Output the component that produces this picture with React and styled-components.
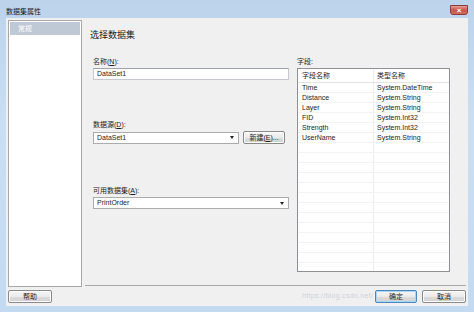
import styled, { createGlobalStyle } from 'styled-components'

const Global = createGlobalStyle`
  html, body { margin: 0; padding: 0; }
  body {
    width: 474px;
    height: 312px;
    overflow: hidden;
    font-family: "Liberation Sans", "Noto Sans CJK SC", sans-serif;
    font-size: 7px;
    color: #1e1e1e;
  }
`

const Frame = styled.div`
  position: relative;
  width: 474px;
  height: 312px;
  display: flex;
  flex-direction: column;
  background: linear-gradient(180deg, #bcd3ec 0%, #cadff3 40%, #c4daf1 100%);
  box-sizing: border-box;
`

const TitleBar = styled.div`
  height: 18px;
  display: flex;
  align-items: center;
  justify-content: space-between;
  padding: 3px 6px 0 6px;
  box-sizing: border-box;
`

const Title = styled.span`
  font-size: 7px;
  color: #1a1a1a;
`

const CloseButton = styled.div`
  align-self: flex-start;
  margin-top: 2px;
  width: 18px;
  height: 10px;
  border-radius: 0 0 3px 3px;
  border: 1px solid #8c3a3a;
  background: linear-gradient(180deg, #e5a095 0%, #c8564a 50%, #d06a5c 100%);
  color: #fff;
  font-size: 8px;
  line-height: 10px;
  text-align: center;
  font-weight: bold;
  box-sizing: border-box;
`

const Client = styled.div`
  margin: 0 6px 6px 6px;
  height: 288px;
  background: #f0f0f0;
  display: flex;
  flex-direction: column;
  position: relative;
`

const Top = styled.div`
  height: 269px;
  padding-top: 2px;
  box-sizing: border-box;
  display: flex;
  align-items: flex-start;
`

const Nav = styled.div`
  margin-left: 2px;
  width: 74px;
  height: 267px;
  box-sizing: border-box;
  background: #fff;
  border: 1px solid #a8a8a8;
  padding: 1px;
`

const NavItem = styled.div`
  height: 13px;
  line-height: 13px;
  padding-left: 8px;
  background: ${p => (p.$active ? '#bfc9d6' : 'transparent')};
  color: ${p => (p.$active ? '#fff' : '#222')};
`

const Main = styled.div`
  flex: 1;
  margin: 0 2px 0 3px;
  height: 266px;
  box-sizing: border-box;
  border-bottom: 1px solid #a9a9a9;
  padding-top: 10px;
`

const Heading = styled.div`
  margin-left: 5px;
  font-size: 9px;
  line-height: 11px;
  color: #1a1a1a;
`

const Columns = styled.div`
  display: flex;
  gap: 8px;
  margin-top: 16px;
  padding-left: 8px;
`

const FormColumn = styled.div`
  width: 196px;
  display: flex;
  flex-direction: column;
`

const FieldColumn = styled.div`
  width: 153px;
  display: flex;
  flex-direction: column;
`

const Label = styled.div`
  height: 10px;
  line-height: 10px;
  margin-top: ${p => p.$gap || 0}px;
  margin-bottom: 1px;
  white-space: nowrap;
`

const Key = styled.span`
  text-decoration: underline;
`

const TextBox = styled.div`
  height: 12px;
  box-sizing: border-box;
  background: #fff;
  border: 1px solid #c5c8cf;
  border-top-color: #9ea2a9;
  line-height: 10px;
  padding-left: 3px;
`

const Row = styled.div`
  display: flex;
  gap: 4px;
  align-items: center;
`

const Combo = styled.div`
  width: ${p => p.$width}px;
  height: 12px;
  box-sizing: border-box;
  background: #fff;
  border: 1px solid #acacac;
  line-height: 10px;
  padding: 0 4px 0 3px;
  display: flex;
  justify-content: space-between;
  align-items: center;
`

const Arrow = styled.span`
  width: 0;
  height: 0;
  border-left: 2px solid transparent;
  border-right: 2px solid transparent;
  border-top: 3px solid #222;
`

const Button = styled.div`
  position: relative;
  z-index: 1;
  width: ${p => p.$width}px;
  height: 13px;
  box-sizing: border-box;
  border: 1px solid ${p => (p.$default ? '#4a88c0' : '#8a8a8a')};
  border-radius: 2px;
  background: linear-gradient(180deg, #f6f6f6 0%, #ebebeb 50%, #dcdcdc 51%, #d2d2d2 100%);
  box-shadow: inset 0 0 0 1px ${p => (p.$default ? '#a9d6f5' : '#fbfbfb')};
  line-height: 11px;
  text-align: center;
  white-space: nowrap;
`

const ListBox = styled.div`
  height: 204px;
  box-sizing: border-box;
  background: #fff;
  border: 1px solid #8e9196;
  overflow: hidden;
`

const ListRow = styled.div`
  display: grid;
  grid-template-columns: 76px 1fr;
  height: ${p => (p.$header ? 14 : 10)}px;
  line-height: ${p => (p.$header ? 14 : 10)}px;
  border-bottom: 1px solid ${p => (p.$header ? '#e3e3e3' : '#f3f3f3')};
  box-sizing: border-box;
`

const Cell = styled.div`
  padding-left: ${p => (p.$first ? 4 : 3)}px;
  border-right: ${p => (p.$first ? '1px solid #ededed' : 'none')};
  white-space: nowrap;
  overflow: hidden;
`

const Footer = styled.div`
  height: 19px;
  padding: 3px 2px 0 2px;
  box-sizing: border-box;
  display: flex;
  align-items: flex-start;
`

const Spacer = styled.div`
  flex: 1;
`

const FooterRight = styled.div`
  display: flex;
  gap: 5px;
`

const Watermark = styled.div`
  position: absolute;
  left: 296px;
  bottom: 7px;
  font-size: 7px;
  color: rgba(195, 200, 212, 0.8);
  letter-spacing: 0.3px;
  pointer-events: none;
`

const fields = [
  ['Time', 'System.DateTime'],
  ['Distance', 'System.String'],
  ['Layer', 'System.String'],
  ['FID', 'System.Int32'],
  ['Strength', 'System.Int32'],
  ['UserName', 'System.String'],
]

export default function App() {
  const rows = [...fields]
  while (rows.length < 20) rows.push(['', ''])

  return (
    <>
      <Global />
      <Frame>
        <TitleBar>
          <Title>数据集属性</Title>
          <CloseButton>×</CloseButton>
        </TitleBar>
        <Client>
          <Top>
            <Nav>
              <NavItem $active>常规</NavItem>
            </Nav>
            <Main>
              <Heading>选择数据集</Heading>
              <Columns>
                <FormColumn>
                  <Label>名称(<Key>N</Key>):</Label>
                  <TextBox>DataSet1</TextBox>
                  <Label $gap={40}>数据源(<Key>D</Key>):</Label>
                  <Row>
                    <Combo $width={146}>
                      <span>DataSet1</span>
                      <Arrow />
                    </Combo>
                    <Button $width={42}>新建(<Key>E</Key>)...</Button>
                  </Row>
                  <Label $gap={42}>可用数据集(<Key>A</Key>):</Label>
                  <Combo $width={196}>
                    <span>PrintOrder</span>
                    <Arrow />
                  </Combo>
                </FormColumn>
                <FieldColumn>
                  <Label>字段:</Label>
                  <ListBox>
                    <ListRow $header>
                      <Cell $first>字段名称</Cell>
                      <Cell>类型名称</Cell>
                    </ListRow>
                    {rows.map((r, i) => (
                      <ListRow key={i}>
                        <Cell $first>{r[0]}</Cell>
                        <Cell>{r[1]}</Cell>
                      </ListRow>
                    ))}
                  </ListBox>
                </FieldColumn>
              </Columns>
            </Main>
          </Top>
          <Footer>
            <Button $width={44}>帮助</Button>
            <Spacer />
            <FooterRight>
              <Button $width={42} $default>确定</Button>
              <Button $width={44}>取消</Button>
            </FooterRight>
          </Footer>
          <Watermark>https://blog.csdn.net/</Watermark>
        </Client>
      </Frame>
    </>
  )
}
